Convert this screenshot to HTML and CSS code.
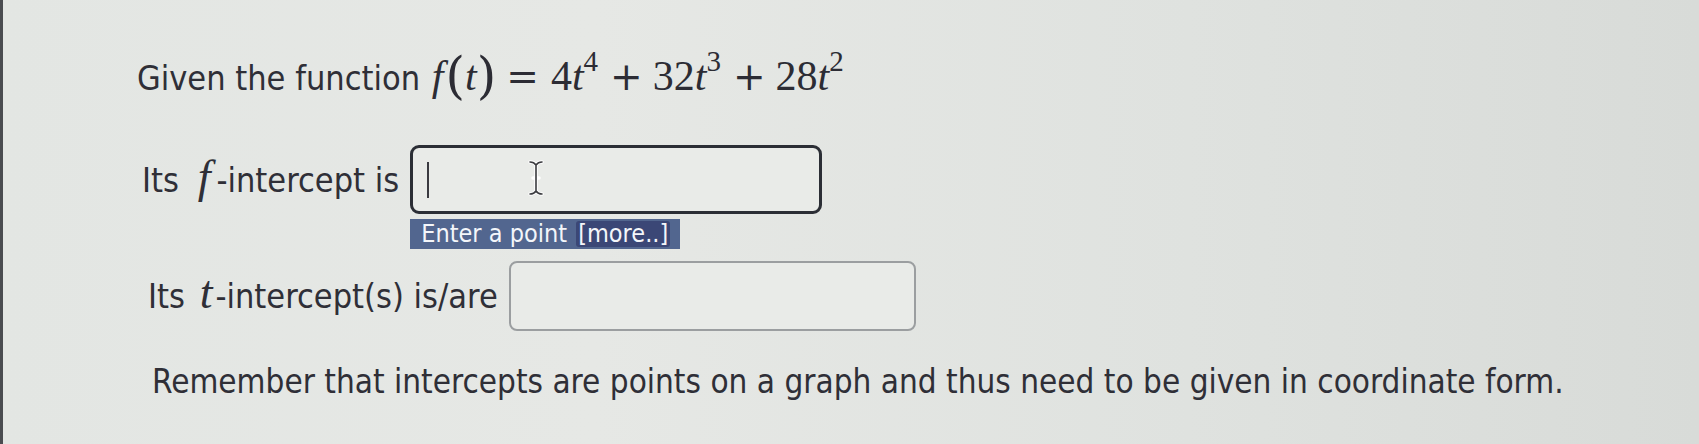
FILE: index.html
```html
<!DOCTYPE html>
<html lang="en">
<head>
<meta charset="utf-8">
<title>Intercepts</title>
<link rel="stylesheet" href="styles.css">
</head>
<body>
<main class="page">
  <p class="line title">Given the function <span class="math"><span class="mi f">f</span><span class="paren">(</span><span class="mi">t</span><span class="paren">)</span><span class="rel">=</span><span class="mn">4</span><span class="mi">t</span><sup class="sup">4</sup><span class="bin">+</span><span class="mn">32</span><span class="mi">t</span><sup class="sup">3</sup><span class="bin">+</span><span class="mn">28</span><span class="mi">t</span><sup class="sup">2</sup></span></p>

  <div class="answer answer-f">
    <span class="label">Its <span class="var var-f">f</span>-intercept is</span>
    <div class="field field-active">
      <span class="caret"></span>
      <svg class="ibeam" width="18" height="36" viewBox="0 0 18 36" aria-hidden="true">
        <path d="M3 2 Q7 2 9 5 Q11 2 15 2 M9 5 V31 M3 34 Q7 34 9 31 Q11 34 15 34 M6 18 H12" fill="none" stroke="#ffffff" stroke-width="3.5" stroke-linecap="round"/>
        <path d="M3 2 Q7 2 9 5 Q11 2 15 2 M9 5 V31 M3 34 Q7 34 9 31 Q11 34 15 34" fill="none" stroke="#3a3b3f" stroke-width="1.6" stroke-linecap="round"/>
      </svg>
    </div>
    <div class="hint">Enter a point <span class="more">[more..]</span></div>
  </div>

  <div class="answer answer-t">
    <span class="label">Its <span class="var">t</span>-intercept(s) is/are</span>
    <div class="field field-idle"></div>
  </div>

  <p class="line note">Remember that intercepts are points on a graph and thus need to be given in coordinate form.</p>
</main>
</body>
</html>
```

FILE: styles.css
```css
html, body {
  margin: 0;
  padding: 0;
}

body {
  width: 1699px;
  height: 444px;
  overflow: hidden;
  background: linear-gradient(90deg, #e3e6e3 0%, #e6e8e5 35%, #dfe2df 70%, #d8dbd8 100%);
  border-left: 3px solid #4a4c50;
  box-sizing: border-box;
  font-family: "DejaVu Sans Condensed", "DejaVu Sans", sans-serif;
  font-stretch: condensed;
  font-size: 34px;
  color: #2f2f37;
}

.page {
  padding-top: 52px;
}

.line {
  margin: 0;
  line-height: 48px;
  white-space: nowrap;
}

.title {
  padding-left: 134px;
}

.math {
  font-family: "Liberation Serif", serif;
  font-size: 42px;
  font-stretch: normal;
  color: #2c2c34;
}

.mi {
  font-style: italic;
}

.mi.f {
  margin-left: 2px;
  margin-right: 2px;
}

.paren {
  font-size: 50px;
  font-family: "DejaVu Serif", serif;
  font-weight: 300;
  vertical-align: -3px;
}

.rel,
.bin {
  font-family: "DejaVu Serif", serif;
  font-size: 39px;
}

.rel {
  margin: 0 12px 0 10px;
}

.bin {
  margin: 0 10px 0 12px;
}

.sup {
  font-size: 29px;
  vertical-align: 19px;
  line-height: 0;
  margin-left: 0;
}

.answer {
  display: grid;
  grid-template-columns: max-content max-content;
  column-gap: 11px;
  align-items: center;
}

.answer-f {
  margin-top: 43px;
  padding-left: 139px;
  row-gap: 5px;
}

.answer-t {
  margin-top: 12px;
  padding-left: 145px;
}

.label {
  white-space: nowrap;
  line-height: 40px;
}

.var {
  font-family: "Liberation Serif", serif;
  font-style: italic;
  font-size: 46px;
  font-stretch: normal;
  margin: 0 3px 0 5px;
  line-height: 0;
}

.var-f {
  margin: 0 6px 0 9px;
}

.field {
  position: relative;
  box-sizing: border-box;
  display: flex;
  align-items: center;
  background: #e9ebe8;
}

.field-active {
  width: 412px;
  height: 69px;
  border: 3px solid #2b2e35;
  border-radius: 9px;
  padding-left: 14px;
}

.field-idle {
  width: 407px;
  height: 70px;
  border: 2px solid #9b9ea0;
  border-radius: 8px;
}

.caret {
  display: block;
  width: 2px;
  height: 36px;
  background: #3a3a40;
}

.ibeam {
  position: absolute;
  left: 114px;
  top: 12px;
}

.hint {
  grid-column: 2;
  justify-self: start;
  background: #52668f;
  color: #f4f6fa;
  font-size: 25px;
  line-height: 30px;
  height: 30px;
  padding: 0 10px 0 11px;
  white-space: nowrap;
}

.more {
  display: inline-block;
  background: #3b4776;
  border-radius: 3px;
  line-height: 26px;
  padding: 0 2px;
  margin-left: 2px;
}

.note {
  margin-top: 27px;
  padding-left: 149px;
  font-size: 33px;
}
```
